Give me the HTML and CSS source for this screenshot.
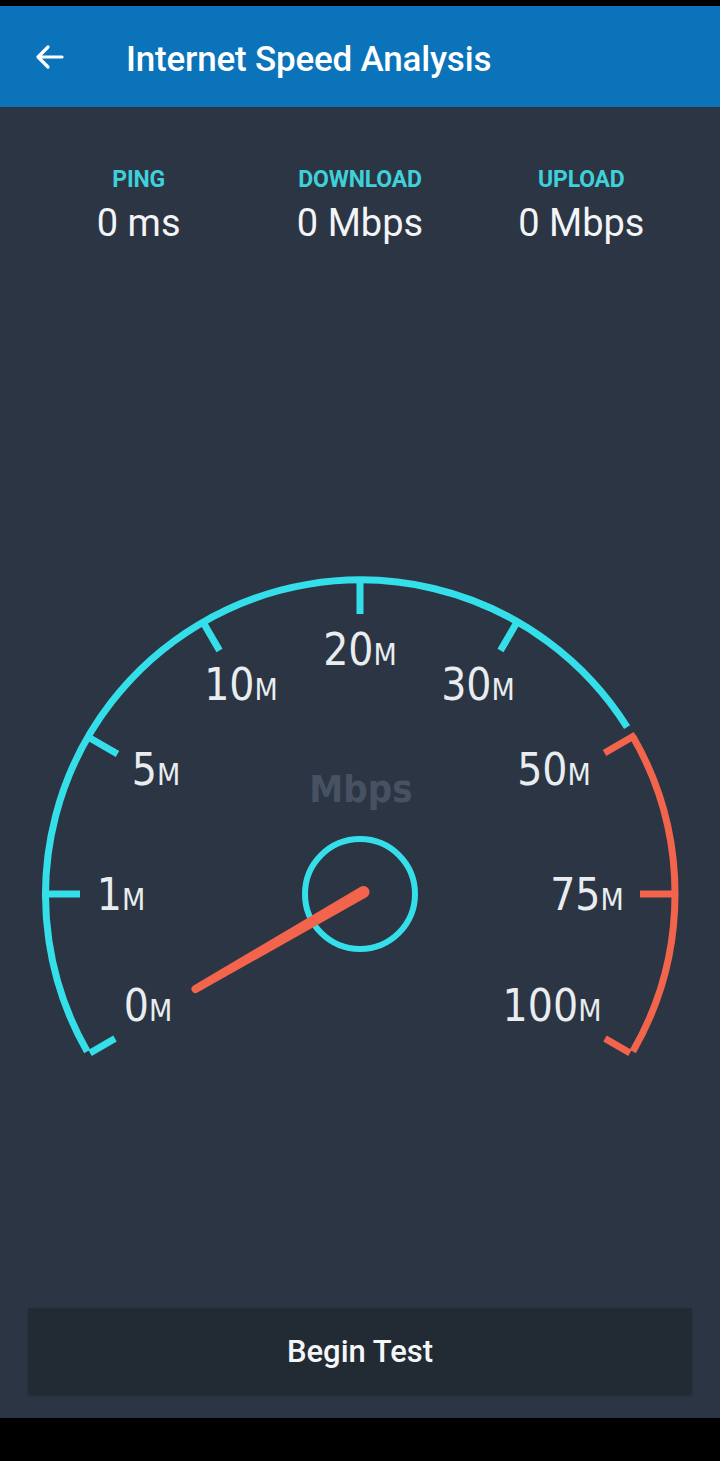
FILE: index.html
```html
<!DOCTYPE html>
<html lang="en">
<head>
  <meta charset="UTF-8" />
  <meta name="viewport" content="width=device-width, initial-scale=1.0"/>
  <title>Internet Speed Analysis</title>
  <link rel="stylesheet" href="styles.css">
</head>
<body>

<div class="app">
  <!-- 顶栏 -->
  <header class="topbar">
    <svg class="back" width="30" height="26" viewBox="0 0 30 26">
      <path d="M28 13H4M14 3L4 13l10 10" fill="none" stroke="#fff" stroke-width="3.2" stroke-linecap="round" stroke-linejoin="round"/>
    </svg>
    <h1>Internet Speed Analysis</h1>
  </header>

  <main class="screen">
    <div class="stats">
      <div class="stat">
        <span class="stat-label">PING</span>
        <span class="stat-value">0 ms</span>
      </div>
      <div class="stat">
        <span class="stat-label">DOWNLOAD</span>
        <span class="stat-value">0 Mbps</span>
      </div>
      <div class="stat">
        <span class="stat-label">UPLOAD</span>
        <span class="stat-value">0 Mbps</span>
      </div>
    </div>

    <!-- 仪表盘 -->
    <svg class="gauge" width="720" height="520" viewBox="0 0 720 520">
      <g fill="none" stroke-width="7">
        <path class="arc-cyan" d="M87.2 490.5A315 315 0 0 1 627.1 166.1"/>
        <path class="arc-red" d="M632.8 175.5A315 315 0 0 1 632.8 490.5"/>
        <g class="arc-cyan">
          <line x1="90" y1="492" x2="115" y2="477.5"/>
          <line x1="42" y1="333" x2="80" y2="333"/>
          <line x1="87.2" y1="175.5" x2="117.5" y2="193"/>
          <line x1="202.5" y1="60.2" x2="219.5" y2="89.6"/>
          <line x1="360" y1="18" x2="360" y2="53"/>
          <line x1="517.5" y1="60.2" x2="500.5" y2="89.6"/>
        </g>
        <g class="arc-red">
          <line x1="635.5" y1="174" x2="604.5" y2="192"/>
          <line x1="678" y1="333" x2="640" y2="333"/>
          <line x1="630" y1="492" x2="605" y2="477.5"/>
        </g>
      </g>

      <g class="tick-label" text-anchor="middle">
        <text x="148" y="460">0<tspan class="unit">M</tspan></text>
        <text x="121" y="349">1<tspan class="unit">M</tspan></text>
        <text x="156" y="224">5<tspan class="unit">M</tspan></text>
        <text x="241" y="139">10<tspan class="unit">M</tspan></text>
        <text x="360" y="104">20<tspan class="unit">M</tspan></text>
        <text x="478" y="139">30<tspan class="unit">M</tspan></text>
        <text x="554" y="224">50<tspan class="unit">M</tspan></text>
        <text x="587" y="349">75<tspan class="unit">M</tspan></text>
        <text x="552" y="460">100<tspan class="unit">M</tspan></text>
      </g>

      <text class="gauge-unit" x="361" y="241" text-anchor="middle">Mbps</text>

      <circle class="hub" cx="360" cy="333" r="55"/>
      <path class="needle" d="M360.5 325.8L193.5 424.5A4 4 0 0 0 197.5 431.5L366.5 336.2A6 6 0 0 0 360.5 325.8Z"/>
    </svg>

    <button class="begin">Begin Test</button>
  </main>
</div>

</body>
</html>
```

FILE: styles.css
```css
html, body {
  margin: 0;
  padding: 0;
  background: #000;
  font-family: Roboto, "Noto Sans", sans-serif;
}
.app {
  margin-top: 6px;
  width: 720px;
}
.topbar {
  height: 101px;
  background: #0b73ba;
  display: flex;
  align-items: center;
  padding: 6px 0 0 34px;
  box-sizing: border-box;
}
.back {
  display: block;
  margin-top: -6px;
}
.topbar h1 {
  margin: 0 0 0 62px;
  color: #fff;
  font-size: 35px;
  font-weight: 500;
  letter-spacing: -0.2px;
}
.screen {
  height: 1311px;
  background: #2b3544;
  display: flex;
  flex-direction: column;
  box-sizing: border-box;
  padding: 60px 28px 23px;
}
.stats {
  display: grid;
  grid-template-columns: repeat(3, 1fr);
}
.stat {
  display: flex;
  flex-direction: column;
  align-items: center;
}
.stat-label {
  color: #3fd0d9;
  font-size: 23px;
  font-weight: 700;
  line-height: 26px;
  letter-spacing: -0.2px;
}
.stat-value {
  margin-top: 8px;
  color: #f2f4f6;
  font-size: 38px;
  line-height: 44px;
}
.gauge {
  display: block;
  margin: 316px -28px 0;
}
.arc-cyan {
  stroke: #35dfe9;
}
.arc-red {
  stroke: #f2644c;
}
.tick-label {
  font-family: "Liberation Sans Narrow", "DejaVu Sans Condensed", "DejaVu Sans", sans-serif;
  font-stretch: condensed;
  font-size: 44px;
  fill: #e9edf0;
}
.tick-label .unit {
  font-size: 30px;
}
.gauge-unit {
  font-family: "Liberation Sans Narrow", "DejaVu Sans Condensed", "DejaVu Sans", sans-serif;
  font-stretch: condensed;
  font-size: 38px;
  font-weight: bold;
  fill: #465262;
}
.hub {
  fill: none;
  stroke: #35dfe9;
  stroke-width: 6;
}
.needle {
  fill: #f2644c;
}
.begin {
  margin-top: auto;
  height: 87px;
  border: 0;
  border-radius: 2px;
  background: #222a34;
  color: #f4f6f8;
  font-family: Roboto, sans-serif;
  font-size: 31px;
  font-weight: 500;
  box-shadow: 0 1px 3px rgba(0,0,0,0.2);
}
```
